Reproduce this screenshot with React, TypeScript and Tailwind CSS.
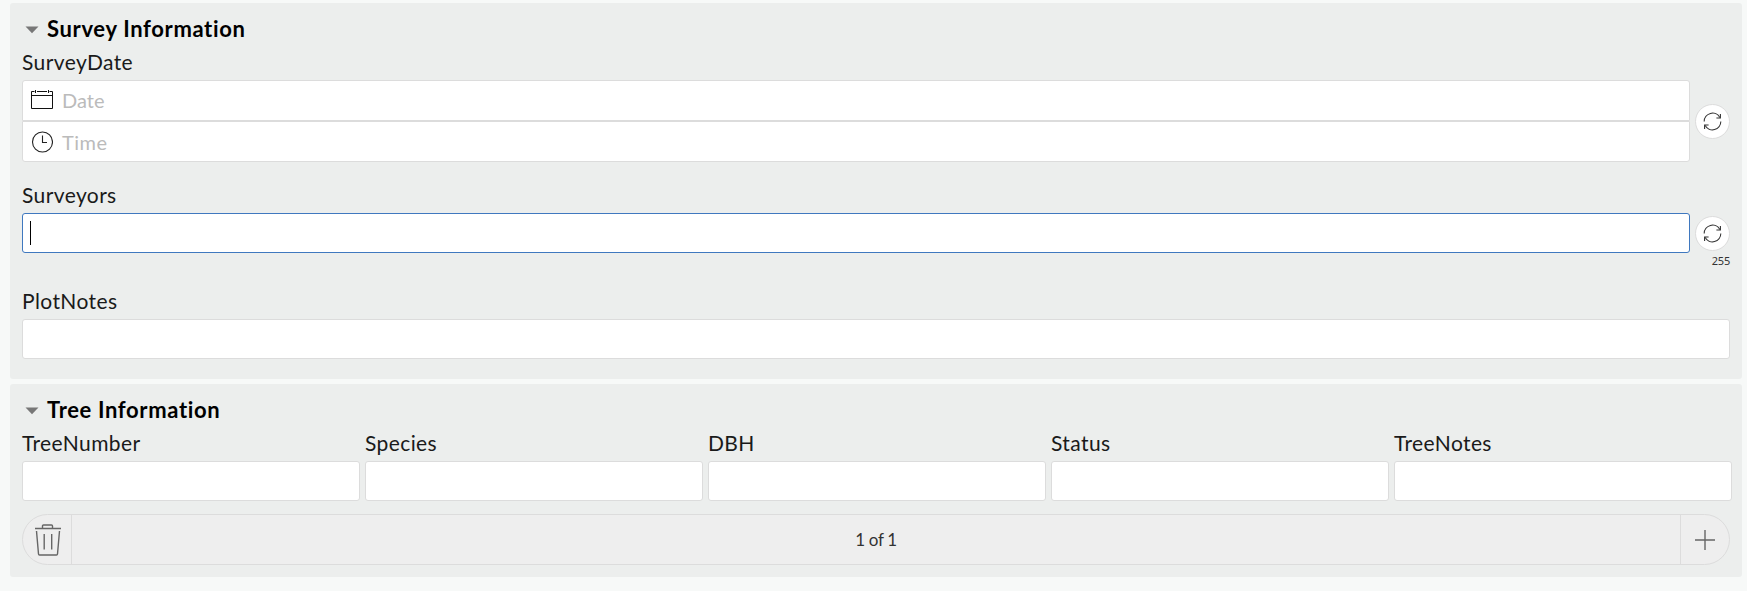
import type { ReactNode } from "react";

const treeFields = ["TreeNumber", "Species", "DBH", "Status", "TreeNotes"];

const Label = ({ children }: { children: ReactNode }) => (
  <label className="flex h-7 items-center pb-2 text-[21px] leading-7 tracking-[0.4px] whitespace-nowrap text-[#1a1a1a]">
    {children}
  </label>
);

const Group = ({ title, children }: { title: string; children: ReactNode }) => (
  <section className="rounded-[3px] bg-[#eceeed] pr-2.5 pl-3">
    <header className="flex h-[49px] items-center gap-2 pl-[3px]">
      <svg width="14" height="8" viewBox="0 0 14 8" className="mt-1">
        <path d="M0.5 0.5h13L7 7.2z" fill="#777777" />
      </svg>
      <h2 className="pt-0.5 text-[22px] font-bold leading-7 tracking-[0.65px] text-black">{title}</h2>
    </header>
    {children}
  </section>
);

const Box = ({ children, focused }: { children?: ReactNode; focused?: boolean }) => (
  <div
    className={`flex h-10 items-center rounded-[3px] border bg-white ${
      focused ? "border-[#3f78bf]" : "border-[#dcdcdc]"
    }`}
  >
    {children}
  </div>
);

const RefreshButton = () => (
  <button className="flex size-[35px] shrink-0 items-center justify-center rounded-full border border-[#dcdcdc] bg-white">
    <svg width="19" height="19" viewBox="0 0 19 19" fill="none" stroke="#333333" strokeWidth="1.1">
      <path d="M1.2 9.5a8.3 8.3 0 0 1 15.6-4M17.8 9.5a8.3 8.3 0 0 1-15.6 4" />
      <path d="M17.4 2v4h-4M1.6 17v-4h4" />
    </svg>
  </button>
);

const CalendarIcon = () => (
  <svg width="22" height="19" viewBox="0 0 22 19" fill="none" stroke="#111111">
    <path d="M3.5 1.5h-3v17h21v-17h-3M6 1.5h10M0.5 5.5h21M4.5 0v3M17.5 0v3" />
  </svg>
);

const ClockIcon = () => (
  <svg width="22" height="22" viewBox="0 0 22 22" fill="none" stroke="#222222" strokeWidth="1.1">
    <circle cx="11.5" cy="11" r="10" />
    <path d="M11.5 4.5v7H16" />
  </svg>
);

const TrashIcon = () => (
  <svg width="28" height="32" viewBox="0 0 28 32" fill="none" stroke="#666666" strokeWidth="1.4">
    <path d="M1 4.5h26M8.5 4.5V2q0-1 1-1h8q1 0 1 1v2.5" />
    <path d="M2.5 7l2 23q.1 1 1 1h17q.9 0 1-1l2-23M10.2 10v15.5M17.7 10v15.5" />
  </svg>
);

export default function App() {
  return (
    <main className="flex h-[591px] w-[1747px] flex-col gap-[5px] bg-[#f7f9f8] pt-[3px] pr-[5px] pl-2.5 font-['Lato',sans-serif]">
      <Group title="Survey Information">
        <Label>SurveyDate</Label>
        <div className="mr-0.5 flex items-center gap-[5px]">
          <div className="grow">
            <div className="flex h-[41px] items-center gap-[9px] rounded-t-[3px] border border-[#dcdcdc] bg-white pb-0.5 pl-2">
              <CalendarIcon />
              <span className="text-[20px] text-[#bbbbbb]">Date</span>
            </div>
            <div className="flex h-[41px] items-center gap-[9px] rounded-b-[3px] border border-[#dcdcdc] bg-white pl-2">
              <ClockIcon />
              <span className="text-[20px] tracking-[0.5px] text-[#bbbbbb]">Time</span>
            </div>
          </div>
          <RefreshButton />
        </div>

        <div className="mt-[23px]">
          <Label>Surveyors</Label>
          <div className="mr-0.5 flex items-center gap-[5px]">
            <div className="grow">
              <Box focused>
                <span className="ml-[7px] h-6 w-px bg-black" />
              </Box>
            </div>
            <RefreshButton />
          </div>
          <div className="mr-0.5 flex h-[18px] items-start justify-end font-['Noto_Sans',sans-serif] text-[11px] leading-4 tracking-[-0.2px] text-[#333333]">
            255
          </div>
        </div>

        <div className="mt-5 mr-0.5 pb-5">
          <Label>PlotNotes</Label>
          <Box />
        </div>
      </Group>

      <Group title="Tree Information">
        <div className="grid grid-cols-5 gap-[5px]">
          {treeFields.map((name) => (
            <div key={name}>
              <Label>{name}</Label>
              <Box />
            </div>
          ))}
        </div>
        <div className="pt-[13px] pr-0.5 pb-3">
          <div className="flex h-[51px] items-stretch rounded-full border border-[#dcdcdc] bg-[#eeeeee]">
            <button className="flex w-[49px] items-center justify-center border-r border-[#dcdcdc] pt-px pl-px">
              <TrashIcon />
            </button>
            <span className="flex grow items-center justify-center text-[17px] tracking-[-0.3px] text-[#333333]">
              1 of 1
            </span>
            <button className="flex w-[49px] items-center justify-center border-l border-[#dcdcdc]">
              <svg width="20" height="20" viewBox="0 0 20 20" stroke="#666666" strokeWidth="1.4">
                <path d="M0 10h20M10 0v20" />
              </svg>
            </button>
          </div>
        </div>
      </Group>
    </main>
  );
}
